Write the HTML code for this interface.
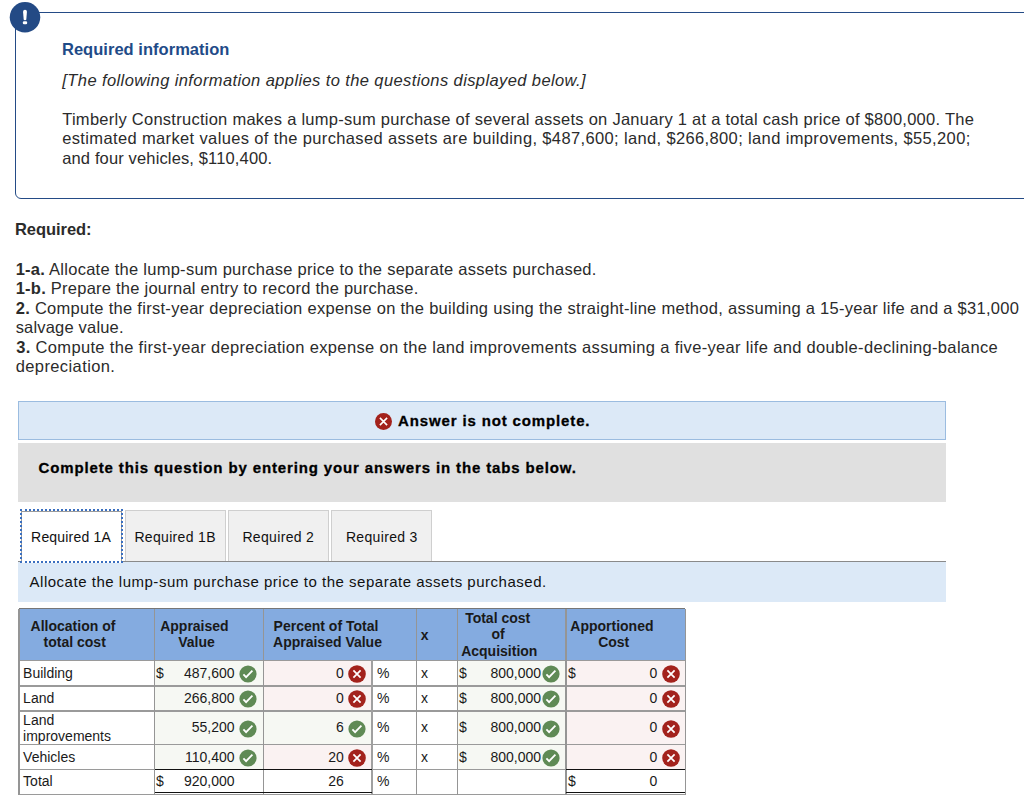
<!DOCTYPE html>
<html><head><meta charset="utf-8"><title>Required information</title>
<style>
html,body{margin:0;padding:0;background:#fff;}
body{width:1024px;height:802px;position:relative;overflow:hidden;font-family:"Liberation Sans", sans-serif;}
.t{position:absolute;white-space:nowrap;}
.r{position:absolute;}
</style></head><body>
<div class="r" style="left:15px;top:12px;width:1025px;height:187px;border:1.5px solid #244b86;border-bottom-left-radius:6px;box-sizing:border-box;"></div>
<svg class="r" style="left:9px;top:1px" width="32" height="32" viewBox="0 0 32 32"><circle cx="16" cy="16.2" r="15.25" fill="#234a85"/><path d="M14.05 10.7Q14.05 8.8 16 8.8Q17.95 8.8 17.95 10.7L17.3 18.5Q17.2 19.2 16 19.2Q14.8 19.2 14.7 18.5Z" fill="#fff"/><rect x="13.8" y="20.2" width="4.4" height="3.1" rx="1.3" fill="#fff"/></svg>
<div class="t" style="left:61.94px;top:40.00px;font-size:16.5px;line-height:18px;font-weight:bold;font-style:normal;color:#1f4b88;letter-spacing:0.0316px;">Required information</div>
<div class="t" style="left:62.36px;top:71.00px;font-size:16.5px;line-height:18px;font-weight:normal;font-style:italic;color:#2b2b2b;letter-spacing:0.3971px;">[The following information applies to the questions displayed below.]</div>
<div class="t" style="left:62.22px;top:110.00px;font-size:16.5px;line-height:18px;font-weight:normal;font-style:normal;color:#2b2b2b;letter-spacing:0.2609px;">Timberly Construction makes a lump-sum purchase of several assets on January 1 at a total cash price of $800,000. The</div>
<div class="t" style="left:62.22px;top:129.00px;font-size:16.5px;line-height:18px;font-weight:normal;font-style:normal;color:#2b2b2b;letter-spacing:0.3617px;">estimated market values of the purchased assets are building, $487,600; land, $266,800; land improvements, $55,200;</div>
<div class="t" style="left:62.22px;top:149.00px;font-size:16.5px;line-height:18px;font-weight:normal;font-style:normal;color:#2b2b2b;letter-spacing:0.1407px;">and four vehicles, $110,400.</div>
<div class="t" style="left:14.98px;top:220.00px;font-size:16.5px;line-height:18px;font-weight:bold;font-style:normal;color:#2b2b2b;letter-spacing:-0.0500px;">Required:</div>
<div class="t" style="left:15.68px;top:260.00px;font-size:16.5px;line-height:18px;font-weight:normal;font-style:normal;color:#2b2b2b;letter-spacing:0.2623px;"><b>1-a.</b> Allocate the lump-sum purchase price to the separate assets purchased.</div>
<div class="t" style="left:15.68px;top:279.00px;font-size:16.5px;line-height:18px;font-weight:normal;font-style:normal;color:#2b2b2b;letter-spacing:0.2421px;"><b>1-b.</b> Prepare the journal entry to record the purchase.</div>
<div class="t" style="left:15.68px;top:299.00px;font-size:16.5px;line-height:18px;font-weight:normal;font-style:normal;color:#2b2b2b;letter-spacing:0.2853px;"><b>2.</b> Compute the first-year depreciation expense on the building using the straight-line method, assuming a 15-year life and a $31,000</div>
<div class="t" style="left:15.68px;top:318.00px;font-size:16.5px;line-height:18px;font-weight:normal;font-style:normal;color:#2b2b2b;letter-spacing:0.1846px;">salvage value.</div>
<div class="t" style="left:16.28px;top:338.00px;font-size:16.5px;line-height:18px;font-weight:normal;font-style:normal;color:#2b2b2b;letter-spacing:0.3301px;"><b>3.</b> Compute the first-year depreciation expense on the land improvements assuming a five-year life and double-declining-balance</div>
<div class="t" style="left:15.68px;top:357.00px;font-size:16.5px;line-height:18px;font-weight:normal;font-style:normal;color:#2b2b2b;letter-spacing:0.4000px;">depreciation.</div>
<div class="r" style="left:18px;top:401px;width:928px;height:39px;background:#dce9f7;border:1px solid #9bbce0;box-sizing:border-box;"></div>
<svg class="r" style="left:375px;top:413px" width="17" height="17" viewBox="0 0 17 17"><circle cx="8.5" cy="8.5" r="8.5" fill="#a3221c"/><path d="M4.9 4.9L12.1 12.1M12.1 4.9L4.9 12.1" stroke="#fff" stroke-width="1.6"/></svg>
<div class="t" style="left:398.00px;top:412.00px;font-size:15px;line-height:17px;font-weight:bold;font-style:normal;color:#000;letter-spacing:0.8636px;-webkit-text-stroke:0.3px #000;">Answer is not complete.</div>
<div class="r" style="left:18px;top:443px;width:927.8px;height:59px;background:#e0e0e0;"></div>
<div class="t" style="left:38.54px;top:459.00px;font-size:15px;line-height:17px;font-weight:bold;font-style:normal;color:#000;letter-spacing:0.8646px;-webkit-text-stroke:0.3px #000;">Complete this question by entering your answers in the tabs below.</div>
<div class="r" style="left:18px;top:561px;width:928px;height:41px;background:#dce9f7;border-top:1px solid #8a8a8a;box-sizing:border-box;"></div>
<div class="r" style="left:124.5px;top:510px;width:101.0px;height:51px;background:#f0f0f0;border:1px solid #cfcfcf;border-bottom:none;box-sizing:border-box;"></div>
<div class="r" style="left:228px;top:510px;width:101px;height:51px;background:#f0f0f0;border:1px solid #cfcfcf;border-bottom:none;box-sizing:border-box;"></div>
<div class="r" style="left:331px;top:510px;width:101px;height:51px;background:#f0f0f0;border:1px solid #cfcfcf;border-bottom:none;box-sizing:border-box;"></div>
<div class="r" style="left:21px;top:510.5px;width:101px;height:52.5px;border:1px solid #9a9a9a;border-bottom:none;box-sizing:border-box;background:#fff;"></div>
<div class="t" style="left:31.12px;top:529.00px;font-size:14px;line-height:16px;font-weight:normal;font-style:normal;color:#111;letter-spacing:0.1800px;">Required 1A</div>
<div class="r" style="left:19.5px;top:509px;width:103.5px;height:54px;outline:2px dotted #3a6fc0;outline-offset:-2px;"></div>
<div class="t" style="left:134.44px;top:529.00px;font-size:14px;line-height:16px;font-weight:normal;font-style:normal;color:#111;letter-spacing:0.3200px;">Required 1B</div>
<div class="t" style="left:242.40px;top:529.00px;font-size:14px;line-height:16px;font-weight:normal;font-style:normal;color:#111;letter-spacing:0.3333px;">Required 2</div>
<div class="t" style="left:345.90px;top:529.00px;font-size:14px;line-height:16px;font-weight:normal;font-style:normal;color:#111;letter-spacing:0.3333px;">Required 3</div>
<div class="t" style="left:29.54px;top:573.00px;font-size:15px;line-height:17px;font-weight:normal;font-style:normal;color:#111;letter-spacing:0.5159px;">Allocate the lump-sum purchase price to the separate assets purchased.</div>
<div class="r" style="left:19px;top:608.5px;width:666.4px;height:51.799999999999955px;background:#84abe0;"></div>
<div class="r" style="left:154.5px;top:660.3px;width:108.89999999999998px;height:25.5px;background:#f6f8f3;"></div>
<div class="r" style="left:263.4px;top:660.3px;width:108.80000000000001px;height:25.5px;background:#faf2f2;"></div>
<div class="r" style="left:457.3px;top:660.3px;width:108.49999999999994px;height:25.5px;background:#f6f8f3;"></div>
<div class="r" style="left:565.8px;top:660.3px;width:119.60000000000002px;height:25.5px;background:#faf2f2;"></div>
<div class="r" style="left:154.5px;top:685.8px;width:108.89999999999998px;height:25.300000000000068px;background:#f6f8f3;"></div>
<div class="r" style="left:263.4px;top:685.8px;width:108.80000000000001px;height:25.300000000000068px;background:#faf2f2;"></div>
<div class="r" style="left:457.3px;top:685.8px;width:108.49999999999994px;height:25.300000000000068px;background:#f6f8f3;"></div>
<div class="r" style="left:565.8px;top:685.8px;width:119.60000000000002px;height:25.300000000000068px;background:#faf2f2;"></div>
<div class="r" style="left:154.5px;top:711.1px;width:108.89999999999998px;height:33.39999999999998px;background:#f6f8f3;"></div>
<div class="r" style="left:263.4px;top:711.1px;width:108.80000000000001px;height:33.39999999999998px;background:#f6f8f3;"></div>
<div class="r" style="left:457.3px;top:711.1px;width:108.49999999999994px;height:33.39999999999998px;background:#f6f8f3;"></div>
<div class="r" style="left:565.8px;top:711.1px;width:119.60000000000002px;height:33.39999999999998px;background:#faf2f2;"></div>
<div class="r" style="left:154.5px;top:744.5px;width:108.89999999999998px;height:24.899999999999977px;background:#f6f8f3;"></div>
<div class="r" style="left:263.4px;top:744.5px;width:108.80000000000001px;height:24.899999999999977px;background:#faf2f2;"></div>
<div class="r" style="left:457.3px;top:744.5px;width:108.49999999999994px;height:24.899999999999977px;background:#f6f8f3;"></div>
<div class="r" style="left:565.8px;top:744.5px;width:119.60000000000002px;height:24.899999999999977px;background:#faf2f2;"></div>
<div class="r" style="left:19px;top:607.75px;width:666.4px;height:1.5px;background:#777;"></div>
<div class="r" style="left:18.25px;top:659.55px;width:667.9px;height:1.5px;background:#9a9a9a;"></div>
<div class="r" style="left:18.25px;top:685.05px;width:667.9px;height:1.5px;background:#9a9a9a;"></div>
<div class="r" style="left:18.25px;top:710.35px;width:667.9px;height:1.5px;background:#9a9a9a;"></div>
<div class="r" style="left:18.25px;top:743.75px;width:667.9px;height:1.5px;background:#9a9a9a;"></div>
<div class="r" style="left:18.25px;top:768.65px;width:667.9px;height:1.5px;background:#9a9a9a;"></div>
<div class="r" style="left:18.25px;top:793.55px;width:667.9px;height:1.5px;background:#9a9a9a;"></div>
<div class="r" style="left:18.25px;top:608.5px;width:1.5px;height:186.54999999999995px;background:#959595;"></div>
<div class="r" style="left:153.75px;top:608.5px;width:1.5px;height:186.54999999999995px;background:#959595;"></div>
<div class="r" style="left:262.65px;top:608.5px;width:1.5px;height:186.54999999999995px;background:#959595;"></div>
<div class="r" style="left:371.45px;top:660.3px;width:1.5px;height:134.0px;background:#a0a0a0;"></div>
<div class="r" style="left:415.85px;top:608.5px;width:1.5px;height:186.54999999999995px;background:#959595;"></div>
<div class="r" style="left:456.55px;top:608.5px;width:1.5px;height:186.54999999999995px;background:#959595;"></div>
<div class="r" style="left:565.05px;top:608.5px;width:1.5px;height:186.54999999999995px;background:#959595;"></div>
<div class="r" style="left:684.65px;top:608.5px;width:1.5px;height:186.54999999999995px;background:#959595;"></div>
<div class="r" style="left:154.5px;top:768.9px;width:217.7px;height:1.2999999999999545px;background:#111;"></div>
<div class="r" style="left:154.5px;top:791.6999999999999px;width:217.7px;height:1.2000000000000455px;background:#111;"></div>
<div class="r" style="left:565.8px;top:768.9px;width:119.60000000000002px;height:1.2999999999999545px;background:#111;"></div>
<div class="r" style="left:565.8px;top:791.6999999999999px;width:119.60000000000002px;height:1.2000000000000455px;background:#111;"></div>
<div class="t" style="left:-227.00px;width:600px;text-align:center;top:617.90px;font-size:14px;line-height:16px;font-weight:bold;font-style:normal;color:#1a1a1a;letter-spacing:0.0000px;">Allocation of</div>
<div class="t" style="left:-225.30px;width:600px;text-align:center;top:633.90px;font-size:14px;line-height:16px;font-weight:bold;font-style:normal;color:#1a1a1a;letter-spacing:0.0000px;">total cost</div>
<div class="t" style="left:-105.60px;width:600px;text-align:center;top:617.90px;font-size:14px;line-height:16px;font-weight:bold;font-style:normal;color:#1a1a1a;letter-spacing:0.0000px;">Appraised</div>
<div class="t" style="left:-103.50px;width:600px;text-align:center;top:633.90px;font-size:14px;line-height:16px;font-weight:bold;font-style:normal;color:#1a1a1a;letter-spacing:0.0000px;">Value</div>
<div class="t" style="left:26.00px;width:600px;text-align:center;top:617.90px;font-size:14px;line-height:16px;font-weight:bold;font-style:normal;color:#1a1a1a;letter-spacing:0.0000px;">Percent of Total</div>
<div class="t" style="left:27.50px;width:600px;text-align:center;top:633.90px;font-size:14px;line-height:16px;font-weight:bold;font-style:normal;color:#1a1a1a;letter-spacing:0.0000px;">Appraised Value</div>
<div class="t" style="left:420.70px;top:626.50px;font-size:14px;line-height:16px;font-weight:bold;font-style:normal;color:#1a1a1a;letter-spacing:0.0000px;">x</div>
<div class="t" style="left:197.70px;width:600px;text-align:center;top:609.90px;font-size:14px;line-height:16px;font-weight:bold;font-style:normal;color:#1a1a1a;letter-spacing:0.0000px;">Total cost</div>
<div class="t" style="left:198.00px;width:600px;text-align:center;top:626.30px;font-size:14px;line-height:16px;font-weight:bold;font-style:normal;color:#1a1a1a;letter-spacing:0.0000px;">of</div>
<div class="t" style="left:199.30px;width:600px;text-align:center;top:642.70px;font-size:14px;line-height:16px;font-weight:bold;font-style:normal;color:#1a1a1a;letter-spacing:0.0000px;">Acquisition</div>
<div class="t" style="left:311.90px;width:600px;text-align:center;top:617.90px;font-size:14px;line-height:16px;font-weight:bold;font-style:normal;color:#1a1a1a;letter-spacing:0.0000px;">Apportioned</div>
<div class="t" style="left:313.70px;width:600px;text-align:center;top:633.90px;font-size:14px;line-height:16px;font-weight:bold;font-style:normal;color:#1a1a1a;letter-spacing:0.0000px;">Cost</div>
<div class="t" style="left:23.10px;top:664.65px;font-size:14px;line-height:16px;font-weight:normal;font-style:normal;color:#1a1a1a;letter-spacing:0.0000px;">Building</div>
<div class="t" style="left:23.10px;top:690.05px;font-size:14px;line-height:16px;font-weight:normal;font-style:normal;color:#1a1a1a;letter-spacing:0.0000px;">Land</div>
<div class="t" style="left:23.10px;top:712.00px;font-size:14px;line-height:16px;font-weight:normal;font-style:normal;color:#1a1a1a;letter-spacing:0.0000px;">Land</div>
<div class="t" style="left:23.10px;top:728.00px;font-size:14px;line-height:16px;font-weight:normal;font-style:normal;color:#1a1a1a;letter-spacing:0.0000px;">improvements</div>
<div class="t" style="left:23.10px;top:748.55px;font-size:14px;line-height:16px;font-weight:normal;font-style:normal;color:#1a1a1a;letter-spacing:0.0000px;">Vehicles</div>
<div class="t" style="left:23.10px;top:773.45px;font-size:14px;line-height:16px;font-weight:normal;font-style:normal;color:#1a1a1a;letter-spacing:0.0000px;">Total</div>
<div class="t" style="left:155.90px;top:664.65px;font-size:14px;line-height:16px;font-weight:normal;font-style:normal;color:#1a1a1a;letter-spacing:0.0000px;">$</div>
<div class="t" style="right:789.40px;top:664.65px;font-size:14px;line-height:16px;font-weight:normal;font-style:normal;color:#1a1a1a;letter-spacing:0.0000px;">487,600</div>
<svg class="r" style="left:239.3px;top:664.85px" width="18" height="18" viewBox="0 0 18 18"><circle cx="9" cy="9" r="8.6" fill="#5f8a55"/><path d="M4.4 9.3L7.1 12.1L13.4 5.7" stroke="#fff" stroke-width="1.8" fill="none"/></svg>
<div class="t" style="right:680.30px;top:664.65px;font-size:14px;line-height:16px;font-weight:normal;font-style:normal;color:#1a1a1a;letter-spacing:0.0000px;">0</div>
<svg class="r" style="left:348.3px;top:664.85px" width="18" height="18" viewBox="0 0 18 18"><circle cx="9" cy="9" r="8.8" fill="#a3221c"/><path d="M5.4 5.4L12.6 12.6M12.6 5.4L5.4 12.6" stroke="#fff" stroke-width="1.75"/></svg>
<div class="t" style="left:377.00px;top:664.65px;font-size:14px;line-height:16px;font-weight:normal;font-style:normal;color:#1a1a1a;letter-spacing:0.0000px;">%</div>
<div class="t" style="left:421.00px;top:664.65px;font-size:14px;line-height:16px;font-weight:normal;font-style:normal;color:#1a1a1a;letter-spacing:0.0000px;">x</div>
<div class="t" style="left:458.90px;top:664.65px;font-size:14px;line-height:16px;font-weight:normal;font-style:normal;color:#1a1a1a;letter-spacing:0.0000px;">$</div>
<div class="t" style="right:483.00px;top:664.65px;font-size:14px;line-height:16px;font-weight:normal;font-style:normal;color:#1a1a1a;letter-spacing:0.0000px;">800,000</div>
<svg class="r" style="left:542.2px;top:664.85px" width="18" height="18" viewBox="0 0 18 18"><circle cx="9" cy="9" r="8.6" fill="#5f8a55"/><path d="M4.4 9.3L7.1 12.1L13.4 5.7" stroke="#fff" stroke-width="1.8" fill="none"/></svg>
<div class="t" style="right:366.60px;top:664.65px;font-size:14px;line-height:16px;font-weight:normal;font-style:normal;color:#1a1a1a;letter-spacing:0.0000px;">0</div>
<svg class="r" style="left:662px;top:664.85px" width="18" height="18" viewBox="0 0 18 18"><circle cx="9" cy="9" r="8.8" fill="#a3221c"/><path d="M5.4 5.4L12.6 12.6M12.6 5.4L5.4 12.6" stroke="#fff" stroke-width="1.75"/></svg>
<div class="t" style="left:567.90px;top:664.65px;font-size:14px;line-height:16px;font-weight:normal;font-style:normal;color:#1a1a1a;letter-spacing:0.0000px;">$</div>
<div class="t" style="right:789.40px;top:690.05px;font-size:14px;line-height:16px;font-weight:normal;font-style:normal;color:#1a1a1a;letter-spacing:0.0000px;">266,800</div>
<svg class="r" style="left:239.3px;top:690.25px" width="18" height="18" viewBox="0 0 18 18"><circle cx="9" cy="9" r="8.6" fill="#5f8a55"/><path d="M4.4 9.3L7.1 12.1L13.4 5.7" stroke="#fff" stroke-width="1.8" fill="none"/></svg>
<div class="t" style="right:680.30px;top:690.05px;font-size:14px;line-height:16px;font-weight:normal;font-style:normal;color:#1a1a1a;letter-spacing:0.0000px;">0</div>
<svg class="r" style="left:348.3px;top:690.25px" width="18" height="18" viewBox="0 0 18 18"><circle cx="9" cy="9" r="8.8" fill="#a3221c"/><path d="M5.4 5.4L12.6 12.6M12.6 5.4L5.4 12.6" stroke="#fff" stroke-width="1.75"/></svg>
<div class="t" style="left:377.00px;top:690.05px;font-size:14px;line-height:16px;font-weight:normal;font-style:normal;color:#1a1a1a;letter-spacing:0.0000px;">%</div>
<div class="t" style="left:421.00px;top:690.05px;font-size:14px;line-height:16px;font-weight:normal;font-style:normal;color:#1a1a1a;letter-spacing:0.0000px;">x</div>
<div class="t" style="left:458.90px;top:690.05px;font-size:14px;line-height:16px;font-weight:normal;font-style:normal;color:#1a1a1a;letter-spacing:0.0000px;">$</div>
<div class="t" style="right:483.00px;top:690.05px;font-size:14px;line-height:16px;font-weight:normal;font-style:normal;color:#1a1a1a;letter-spacing:0.0000px;">800,000</div>
<svg class="r" style="left:542.2px;top:690.25px" width="18" height="18" viewBox="0 0 18 18"><circle cx="9" cy="9" r="8.6" fill="#5f8a55"/><path d="M4.4 9.3L7.1 12.1L13.4 5.7" stroke="#fff" stroke-width="1.8" fill="none"/></svg>
<div class="t" style="right:366.60px;top:690.05px;font-size:14px;line-height:16px;font-weight:normal;font-style:normal;color:#1a1a1a;letter-spacing:0.0000px;">0</div>
<svg class="r" style="left:662px;top:690.25px" width="18" height="18" viewBox="0 0 18 18"><circle cx="9" cy="9" r="8.8" fill="#a3221c"/><path d="M5.4 5.4L12.6 12.6M12.6 5.4L5.4 12.6" stroke="#fff" stroke-width="1.75"/></svg>
<div class="t" style="right:789.40px;top:719.40px;font-size:14px;line-height:16px;font-weight:normal;font-style:normal;color:#1a1a1a;letter-spacing:0.0000px;">55,200</div>
<svg class="r" style="left:239.3px;top:719.6px" width="18" height="18" viewBox="0 0 18 18"><circle cx="9" cy="9" r="8.6" fill="#5f8a55"/><path d="M4.4 9.3L7.1 12.1L13.4 5.7" stroke="#fff" stroke-width="1.8" fill="none"/></svg>
<div class="t" style="right:680.30px;top:719.40px;font-size:14px;line-height:16px;font-weight:normal;font-style:normal;color:#1a1a1a;letter-spacing:0.0000px;">6</div>
<svg class="r" style="left:348.3px;top:719.6px" width="18" height="18" viewBox="0 0 18 18"><circle cx="9" cy="9" r="8.6" fill="#5f8a55"/><path d="M4.4 9.3L7.1 12.1L13.4 5.7" stroke="#fff" stroke-width="1.8" fill="none"/></svg>
<div class="t" style="left:377.00px;top:719.40px;font-size:14px;line-height:16px;font-weight:normal;font-style:normal;color:#1a1a1a;letter-spacing:0.0000px;">%</div>
<div class="t" style="left:421.00px;top:719.40px;font-size:14px;line-height:16px;font-weight:normal;font-style:normal;color:#1a1a1a;letter-spacing:0.0000px;">x</div>
<div class="t" style="left:458.90px;top:719.40px;font-size:14px;line-height:16px;font-weight:normal;font-style:normal;color:#1a1a1a;letter-spacing:0.0000px;">$</div>
<div class="t" style="right:483.00px;top:719.40px;font-size:14px;line-height:16px;font-weight:normal;font-style:normal;color:#1a1a1a;letter-spacing:0.0000px;">800,000</div>
<svg class="r" style="left:542.2px;top:719.6px" width="18" height="18" viewBox="0 0 18 18"><circle cx="9" cy="9" r="8.6" fill="#5f8a55"/><path d="M4.4 9.3L7.1 12.1L13.4 5.7" stroke="#fff" stroke-width="1.8" fill="none"/></svg>
<div class="t" style="right:366.60px;top:719.40px;font-size:14px;line-height:16px;font-weight:normal;font-style:normal;color:#1a1a1a;letter-spacing:0.0000px;">0</div>
<svg class="r" style="left:662px;top:719.6px" width="18" height="18" viewBox="0 0 18 18"><circle cx="9" cy="9" r="8.8" fill="#a3221c"/><path d="M5.4 5.4L12.6 12.6M12.6 5.4L5.4 12.6" stroke="#fff" stroke-width="1.75"/></svg>
<div class="t" style="right:789.40px;top:748.55px;font-size:14px;line-height:16px;font-weight:normal;font-style:normal;color:#1a1a1a;letter-spacing:0.0000px;">110,400</div>
<svg class="r" style="left:239.3px;top:748.75px" width="18" height="18" viewBox="0 0 18 18"><circle cx="9" cy="9" r="8.6" fill="#5f8a55"/><path d="M4.4 9.3L7.1 12.1L13.4 5.7" stroke="#fff" stroke-width="1.8" fill="none"/></svg>
<div class="t" style="right:680.30px;top:748.55px;font-size:14px;line-height:16px;font-weight:normal;font-style:normal;color:#1a1a1a;letter-spacing:0.0000px;">20</div>
<svg class="r" style="left:348.3px;top:748.75px" width="18" height="18" viewBox="0 0 18 18"><circle cx="9" cy="9" r="8.8" fill="#a3221c"/><path d="M5.4 5.4L12.6 12.6M12.6 5.4L5.4 12.6" stroke="#fff" stroke-width="1.75"/></svg>
<div class="t" style="left:377.00px;top:748.55px;font-size:14px;line-height:16px;font-weight:normal;font-style:normal;color:#1a1a1a;letter-spacing:0.0000px;">%</div>
<div class="t" style="left:421.00px;top:748.55px;font-size:14px;line-height:16px;font-weight:normal;font-style:normal;color:#1a1a1a;letter-spacing:0.0000px;">x</div>
<div class="t" style="left:458.90px;top:748.55px;font-size:14px;line-height:16px;font-weight:normal;font-style:normal;color:#1a1a1a;letter-spacing:0.0000px;">$</div>
<div class="t" style="right:483.00px;top:748.55px;font-size:14px;line-height:16px;font-weight:normal;font-style:normal;color:#1a1a1a;letter-spacing:0.0000px;">800,000</div>
<svg class="r" style="left:542.2px;top:748.75px" width="18" height="18" viewBox="0 0 18 18"><circle cx="9" cy="9" r="8.6" fill="#5f8a55"/><path d="M4.4 9.3L7.1 12.1L13.4 5.7" stroke="#fff" stroke-width="1.8" fill="none"/></svg>
<div class="t" style="right:366.60px;top:748.55px;font-size:14px;line-height:16px;font-weight:normal;font-style:normal;color:#1a1a1a;letter-spacing:0.0000px;">0</div>
<svg class="r" style="left:662px;top:748.75px" width="18" height="18" viewBox="0 0 18 18"><circle cx="9" cy="9" r="8.8" fill="#a3221c"/><path d="M5.4 5.4L12.6 12.6M12.6 5.4L5.4 12.6" stroke="#fff" stroke-width="1.75"/></svg>
<div class="t" style="left:155.90px;top:773.45px;font-size:14px;line-height:16px;font-weight:normal;font-style:normal;color:#1a1a1a;letter-spacing:0.0000px;">$</div>
<div class="t" style="right:789.40px;top:773.45px;font-size:14px;line-height:16px;font-weight:normal;font-style:normal;color:#1a1a1a;letter-spacing:0.0000px;">920,000</div>
<div class="t" style="right:680.30px;top:773.45px;font-size:14px;line-height:16px;font-weight:normal;font-style:normal;color:#1a1a1a;letter-spacing:0.0000px;">26</div>
<div class="t" style="left:377.00px;top:773.45px;font-size:14px;line-height:16px;font-weight:normal;font-style:normal;color:#1a1a1a;letter-spacing:0.0000px;">%</div>
<div class="t" style="right:366.60px;top:773.45px;font-size:14px;line-height:16px;font-weight:normal;font-style:normal;color:#1a1a1a;letter-spacing:0.0000px;">0</div>
<div class="t" style="left:567.90px;top:773.45px;font-size:14px;line-height:16px;font-weight:normal;font-style:normal;color:#1a1a1a;letter-spacing:0.0000px;">$</div>
</body></html>
